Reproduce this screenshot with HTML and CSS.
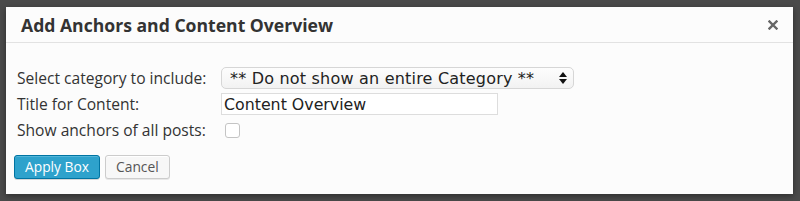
FILE: index.html
```html
<!DOCTYPE html>
<html lang="en">
<head>
  <meta charset="UTF-8">
  <meta name="viewport" content="width=device-width, initial-scale=1.0">
  <title>Add Anchors and Content Overview</title>
  <link rel="stylesheet" href="styles.css">
</head>
<body>
  <div class="dialog">
    <div class="dialog-header">
      <h1 class="dialog-title">Add Anchors and Content Overview</h1>
      <svg class="dialog-close" viewBox="0 0 10 10" width="10" height="10">
        <path d="M1.5 1.5 L8.5 8.5 M8.5 1.5 L1.5 8.5" stroke="#666" stroke-width="2.4" stroke-linecap="square"></path>
      </svg>
    </div>

    <div class="dialog-body">
      <div class="form-grid">
        <label class="form-label">Select category to include:</label>
        <div class="select-wrap">
          <select class="select">
            <option>** Do not show an entire Category **</option>
          </select>
          <svg class="select-arrows" viewBox="0 0 8 12" width="8" height="12">
            <path d="M4 0 L8 5 L0 5 Z" fill="#111"></path>
            <path d="M0 7 L8 7 L4 12 Z" fill="#111"></path>
          </svg>
        </div>

        <label class="form-label">Title for Content:</label>
        <div><input class="text-input" type="text" value="Content Overview"></div>

        <label class="form-label">Show anchors of all posts:</label>
        <div><span class="checkbox"></span></div>
      </div>

      <div class="buttons">
        <button class="button button-primary">Apply Box</button>
        <button class="button">Cancel</button>
      </div>
    </div>
  </div>
</body>
</html>
```

FILE: styles.css
```css
html, body {
  margin: 0;
  height: 100%;
}

body {
  background: #4a4a4a;
  font-family: "Open Sans", "Liberation Sans", sans-serif;
  color: #333;
  overflow: hidden;
}

.dialog {
  margin: 7px 0 0 6px;
  width: 787px;
  height: 187px;
  background: #fcfcfc;
  box-shadow: 0 2px 6px rgba(0, 0, 0, 0.4);
  box-sizing: border-box;
}

.dialog-header {
  display: flex;
  align-items: center;
  justify-content: space-between;
  height: 35px;
  border-bottom: 1px solid #e2e2e2;
  padding: 0 15px 0 15px;
}

.dialog-title {
  margin: 0;
  font-size: 17.6px;
  font-weight: 700;
  color: #333;
}

.dialog-close {
  display: block;
  margin-top: 1px;
}

.dialog-body {
  padding: 22px 11px 0 11px;
}

.form-grid {
  display: grid;
  grid-template-columns: 204px auto;
  grid-auto-rows: 26px;
  align-items: center;
}

.form-label {
  font-size: 15.6px;
  color: #333;
}

.select-wrap {
  position: relative;
  width: 353px;
}

.select {
  appearance: none;
  -webkit-appearance: none;
  width: 100%;
  height: 22px;
  margin: 0;
  padding: 0 0 0 8px;
  border: 1px solid #d6d6d6;
  border-radius: 5px;
  background: linear-gradient(#fdfdfd, #f2f2f2);
  font-family: "DejaVu Sans", sans-serif;
  font-size: 16px;
  letter-spacing: 0.2px;
  color: #222;
}

.select-arrows {
  position: absolute;
  right: 7px;
  top: 5px;
}

.text-input {
  box-sizing: border-box;
  width: 277px;
  height: 22px;
  margin: 0;
  padding: 0 2px;
  border: 1px solid #ddd;
  background: #fff;
  font-family: "DejaVu Sans", sans-serif;
  font-size: 15.8px;
  color: #222;
}

.checkbox {
  display: block;
  width: 13px;
  height: 13px;
  margin-left: 4px;
  border: 1px solid #c4c4c4;
  border-radius: 3px;
  background: #fff;
}

.buttons {
  display: flex;
  gap: 5px;
  margin-top: 12px;
  margin-left: -3px;
}

.button {
  height: 24px;
  padding: 0 10px 1px;
  border: 1px solid #ccc;
  border-radius: 3px;
  background: #f7f7f7;
  box-shadow: inset 0 1px 0 #fff, 0 1px 0 rgba(0, 0, 0, 0.08);
  font-family: "Open Sans", "Liberation Sans", sans-serif;
  font-size: 13.8px;
  color: #555;
}

.button-primary {
  background: #2ea2cc;
  border-color: #0074a2;
  box-shadow: inset 0 1px 0 rgba(120, 200, 230, 0.5), 0 1px 0 rgba(0, 0, 0, 0.15);
  color: #fff;
}
```
